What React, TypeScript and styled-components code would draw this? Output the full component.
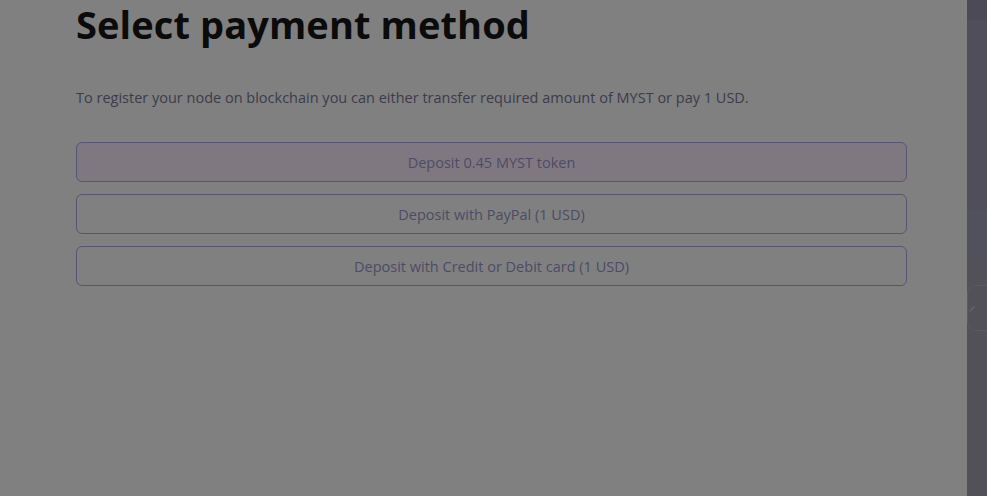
import React from "react";
import styled, { createGlobalStyle } from "styled-components";

const Global = createGlobalStyle`
  html, body { margin: 0; padding: 0; height: 100%; }
  body { font-family: "Open Sans", "Noto Sans", sans-serif; overflow: hidden; }
  #root { height: 100%; }
`;

const Page = styled.div`
  display: flex;
  height: 496px;
  width: 987px;
`;

const Panel = styled.main`
  flex: 0 0 967px;
  background: #808080;
  box-sizing: border-box;
  padding: 0 60px 0 76px;
  display: flex;
  flex-direction: column;
`;

const Title = styled.h1`
  margin: 0;
  font-family: "Open Sans", sans-serif;
  font-weight: 700;
  font-size: 38px;
  line-height: 48px;
  color: #0b0b0b;
  letter-spacing: 0.1px;
`;

const Lead = styled.p`
  margin: 40px 0 0;
  font-size: 14.5px;
  line-height: 20px;
  color: #3c3b4b;
`;

const Options = styled.div`
  margin-top: 34px;
  display: flex;
  flex-direction: column;
  gap: 12px;
`;

const Option = styled.button<{ $active?: boolean }>`
  height: 40px;
  border: 1px solid #575574;
  border-radius: 6px;
  background: ${(p) => (p.$active ? "#807880" : "transparent")};
  color: #4d4b67;
  font-family: "Open Sans", sans-serif;
  font-size: 14.5px;
  cursor: pointer;
`;

const Strip = styled.aside`
  flex: 1;
  background: #4f4e5a;
  display: flex;
  flex-direction: column;
`;

const StripBand = styled.div<{ $h: number; $bg: string }>`
  height: ${(p) => p.$h}px;
  background: ${(p) => p.$bg};
`;

const StripRest = styled.div`
  flex: 1;
  background: #525159;
  padding-top: 27px;
`;

const EditBox = styled.div`
  height: 46px;
  box-sizing: border-box;
  border: 1px solid #5a5964;
  border-right: none;
  border-radius: 9px 0 0 9px;
  display: flex;
  align-items: center;
  padding-left: 1px;
`;

export default function App() {
  return (
    <>
      <Global />
      <Page>
        <Panel>
          <Title>Select payment method</Title>
          <Lead>
            To register your node on blockchain you can either transfer required amount of MYST or pay 1 USD.
          </Lead>
          <Options>
            <Option $active>Deposit 0.45 MYST token</Option>
            <Option>Deposit with PayPal (1 USD)</Option>
            <Option>Deposit with Credit or Debit card (1 USD)</Option>
          </Options>
        </Panel>
        <Strip>
          <StripBand $h={20} $bg="#4b4a56" />
          <StripBand $h={190} $bg="#4f4e5a" />
          <StripBand $h={48} $bg="#51505d" />
          <StripRest>
            <EditBox>
              <svg width="8" height="10" viewBox="0 0 8 10">
                <path d="M1 8 L5 4" stroke="#64626c" strokeWidth="1.6" strokeLinecap="round" />
              </svg>
            </EditBox>
          </StripRest>
        </Strip>
      </Page>
    </>
  );
}
